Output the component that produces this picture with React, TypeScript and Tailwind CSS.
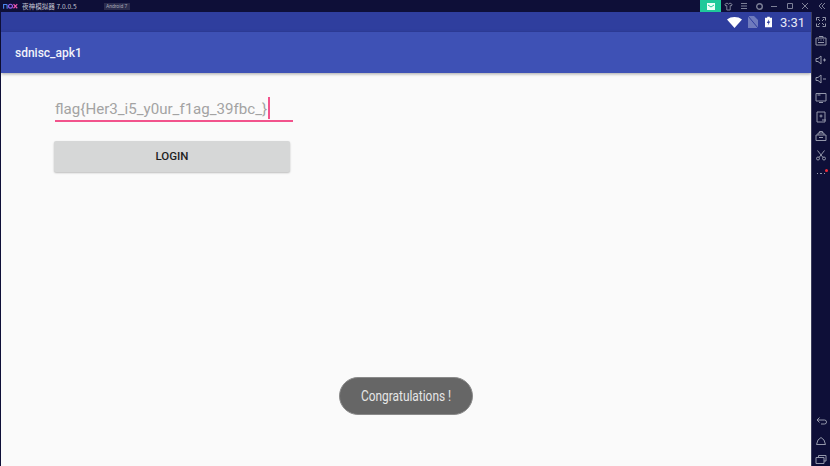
import React from "react";

const Ic = ({ children, h = 19 }: { children: React.ReactNode; h?: number }) => (
  <div className="flex items-center justify-center w-full" style={{ height: h }}>
    <svg width="12" height="12" viewBox="0 0 12 12" fill="none" stroke="#9397aa" strokeWidth="1">
      {children}
    </svg>
  </div>
);

export default function App() {
  return (
    <div className="w-[830px] h-[466px] flex flex-col overflow-hidden bg-white font-['Roboto',sans-serif]">
      <div className="h-[12px] bg-[#0e0f38] flex items-center relative shrink-0">
        <svg width="15" height="6" viewBox="0 0 20 7" className="ml-[3px]" fill="none" strokeWidth="1.500">
          <path d="M0.800 7V1.500h3.500a1.200 1.200 0 0 1 1.200 1.200V7" stroke="#4a86f0" />
          <circle cx="10" cy="3.700" r="2.600" stroke="#9a62f0" />
          <path d="M14 1l5 5.500M19 1l-5 5.500" stroke="#f055b0" />
        </svg>
        <span className="ml-[4px] text-[6.6px] leading-none text-[#c4c5d2] font-['Noto_Sans_CJK_SC',sans-serif]">夜神模拟器 7.0.0.5</span>
        <span className="ml-[27px] w-[26px] h-[7px] flex items-center justify-center bg-[#2b2c4e] text-[5px] leading-none text-[#a5a6b5]">Android 7</span>
        <div className="ml-auto flex items-center h-full">
          <div className="w-[21px] h-full bg-[#1fc99a] flex items-center justify-center">
            <svg width="8" height="7" viewBox="0 0 8 7"><path d="M0 0h8v7H0z" fill="#eafff7" /><path d="M1 2l3 2 3-2" stroke="#1fc99a" fill="none" /></svg>
          </div>
          <svg width="9" height="9" viewBox="0 0 9 9" className="ml-[3px]" fill="none" stroke="#7d8097"><path d="M3 1L.8 2.500l1 1.500 1-.5V8h3.400V3.500l1 .5 1-1.500L6 1 4.500 2.200z" /></svg>
          <svg width="8" height="8" viewBox="0 0 8 8" className="ml-[7px]" stroke="#7d8097"><path d="M1 1.500h6M1 4h6M1 6.500h6" /></svg>
          <svg width="9" height="9" viewBox="0 0 9 9" className="ml-[7px]" fill="none" stroke="#7d8097" strokeWidth="1.400"><circle cx="4.500" cy="4.500" r="2.800" /></svg>
          <svg width="8" height="8" viewBox="0 0 8 8" className="ml-[6px]" stroke="#7d8097"><path d="M1 4.500h6" /></svg>
          <svg width="8" height="8" viewBox="0 0 8 8" className="ml-[8px]" fill="none" stroke="#7d8097"><path d="M1.500 1.500h5v5h-5z" /></svg>
          <svg width="8" height="8" viewBox="0 0 8 8" className="ml-[7px]" stroke="#7d8097"><path d="M1 1l6 6M7 1L1 7" /></svg>
          <div className="w-[19px] ml-[2px] flex items-center justify-end pr-[4px]">
            <svg width="8" height="8" viewBox="0 0 8 8" fill="none" stroke="#7d8097"><path d="M4 1L1 4l3 3M7 1L4 4l3 3" /></svg>
          </div>
        </div>
      </div>
      <div className="flex-1 flex min-h-0">
        <div className="flex-1 flex flex-col min-w-0 relative border-l border-[#0e0f38]">
          <div className="h-[20px] bg-[#2f3e9e] flex items-center justify-end shrink-0 pr-[6px]">
            <svg width="15" height="11" viewBox="0 0 15 11"><path d="M0 2.500C4 -.8 11 -.8 15 2.500L7.500 11z" fill="#fff" /></svg>
            <svg width="10" height="12" viewBox="0 0 10 12" className="ml-[6px]"><path d="M0 12V0h6l4 4v8z" fill="#6f7bbd" /><path d="M0 0l10 12" stroke="#2f3e9e" /></svg>
            <svg width="7" height="12" viewBox="0 0 8 12" className="ml-[7px]"><path d="M2.500 0h3v1H8v11H0V1h2.500z" fill="#fff" /><path d="M4.800 2.500L2 7h1.800l-.6 3L6 5.500H4.200z" fill="#2f3e9e" /></svg>
            <span className="ml-[8px] text-[13px] leading-none text-[#e8eaf6]">3:31</span>
          </div>
          <div className="h-[41px] bg-[#3e51b5] flex items-center pl-[14px] pt-[1px] shrink-0 shadow-[0_1px_3px_rgba(0,0,0,0.35)] relative z-10">
            <span className="text-[12px] font-medium text-[#f2f3fa]">sdnisc_apk1</span>
          </div>
          <div className="flex-1 bg-[#fafafa] flex flex-col items-start pl-[54px] pt-[25px] relative">
            <div className="w-[238px] h-[24px] border-b-2 border-[#f2538c] flex items-start">
              <span className="text-[15.1px] leading-[23px] text-[#a3a3a3]">flag{"{"}Her3_i5_y0ur_f1ag_39fbc_{"}"}</span>
              <span className="w-[2px] h-[22px] bg-[#f2538c] -mt-[1px] ml-[1px]" />
            </div>
            <button className="-ml-[1px] mt-[19px] pt-[1px] w-[236px] h-[31px] rounded-[2px] bg-[#d6d7d7] shadow-[0_1px_2px_rgba(0,0,0,0.25)] flex items-center justify-center text-[11.5px] font-medium text-[#1f1f1f]">
              LOGIN
            </button>
            <div className="absolute left-[338px] top-[304px] w-[134px] h-[38px] rounded-full bg-[#666666] border border-[#8a8a8a] flex items-center justify-center text-[#e6e6e6]">
              <span className="inline-block whitespace-nowrap text-[14px] scale-x-[0.85]">Congratulations !</span>
            </div>
          </div>
        </div>
        <div className="w-[19px] bg-[#0e0f38] border-l border-[#3c3d5c] flex flex-col items-center shrink-0">
          <Ic><path d="M1.500 1.500h3M1.500 1.500v3M10.500 1.500h-3M10.500 1.500v3M1.500 10.500h3M1.500 10.500v-3M10.500 10.500h-3M10.500 10.500v-3M3 3l2 2M9 3L7 5M3 9l2-2M9 9L7 7" /></Ic>
          <Ic><path d="M1 3h10v7H1zM4 1.500h4v1.500M3 5h1M5.500 5h1M8 5h1M3 7.500h6" /></Ic>
          <Ic><path d="M1 4.500h2L6 2v8L3 7.500H1zM8 6h3M9.500 4.500v3" /></Ic>
          <Ic><path d="M1 4.500h2L6 2v8L3 7.500H1zM8 6h3" /></Ic>
          <Ic><path d="M1 1.500h10v7.500H1zM4 10.500h4M2.500 3h3" /></Ic>
          <Ic><path d="M2 1h8v10H2zM6 3.500v3M4.500 5h3M7 9h4" /></Ic>
          <Ic><path d="M1 5h10v5.500H1zM3 5V3h6v2M4.500 3V1.500h3V3M4 7.500h4" /></Ic>
          <Ic><circle cx="3" cy="9.500" r="1.500" /><circle cx="9" cy="9.500" r="1.500" /><path d="M4 8.500L9.500 1.500M8 8.500L2.500 1.500" /></Ic>
          <div className="relative w-full h-[19px] flex items-center justify-center gap-[2px]">
            <span className="w-[1.500px] h-[1.500px] bg-[#9397aa]" />
            <span className="w-[1.500px] h-[1.500px] bg-[#9397aa]" />
            <span className="w-[1.500px] h-[1.500px] bg-[#9397aa]" />
            <span className="absolute right-[2px] top-[5px] w-[3px] h-[3px] rounded-full bg-[#f02a3a]" />
          </div>
          <div className="flex-1" />
          <Ic><path d="M4.500 2.500L2 5l2.500 2.500M2 5h7.500a1.500 1.500 0 0 1 0 4H6" /></Ic>
          <Ic h={22}><path d="M1.500 9.500h9L9 5 6 2.500 3 5z" /></Ic>
          <Ic h={14}><path d="M1 4.500h8V10.500H1zM3.500 4.500V2.500H11V8H9" /></Ic>
        </div>
      </div>
    </div>
  );
}
